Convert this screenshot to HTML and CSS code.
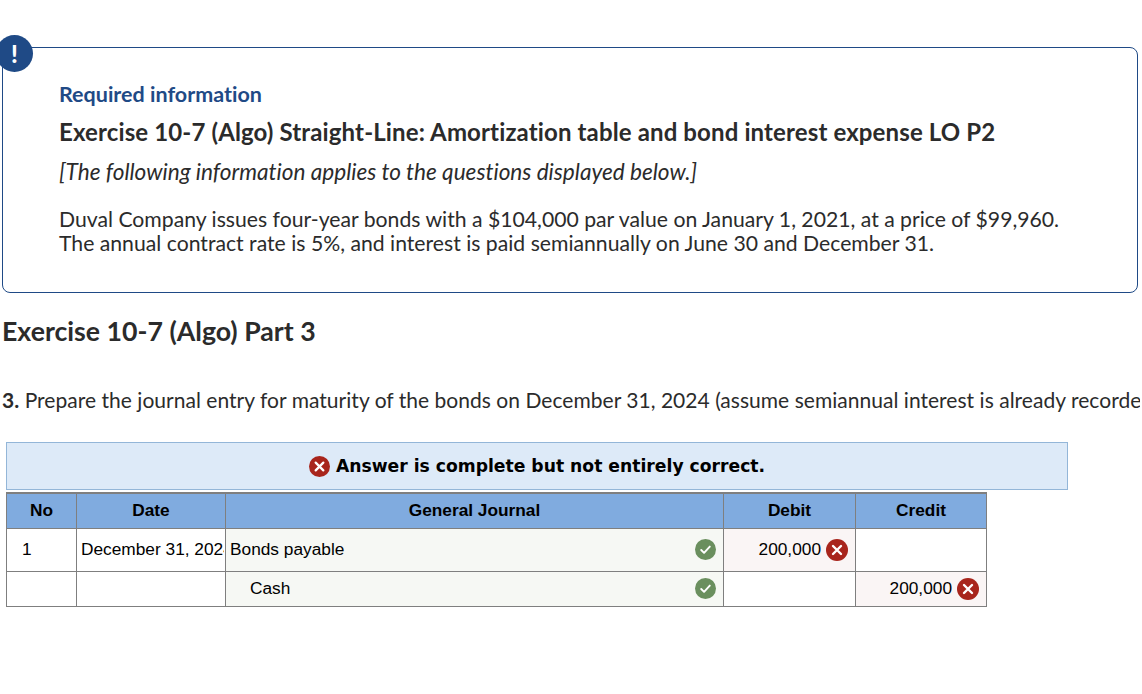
FILE: index.html
```html
<!DOCTYPE html>
<html lang="en">
  <head>
    <meta charset="UTF-8" />
    <title>Exercise 10-7 (Algo) Part 3</title>
    <link rel="stylesheet" href="styles.css">
  </head>
  <body>
    <div class="info-box">
      <div class="info-badge">!</div>
      <div class="info-label">Required information</div>
      <h1 class="info-title">Exercise 10-7 (Algo) Straight-Line: Amortization table and bond interest expense LO P2</h1>
      <p class="info-note">[The following information applies to the questions displayed below.]</p>
      <p class="info-text">Duval Company issues four-year bonds with a $104,000 par value on January 1, 2021, at a price of $99,960.<br>The annual contract rate is 5%, and interest is paid semiannually on June 30 and December 31.</p>
    </div>

    <h2 class="part-title">Exercise 10-7 (Algo) Part 3</h2>
    <p class="question"><b>3.</b> Prepare the journal entry for maturity of the bonds on December 31, 2024 (assume semiannual interest is already recorded).</p>

    <div class="answer-bar">
      <svg class="icon" viewBox="0 0 22 22"><circle cx="11" cy="11" r="11" fill="#a8251c"/><path d="M7 7l8 8M15 7l-8 8" stroke="#fff" stroke-width="2.4" stroke-linecap="round"/></svg>
      <span>Answer is complete but not entirely correct.</span>
    </div>

    <table class="journal">
      <thead>
        <tr>
          <th class="col-no">No</th>
          <th class="col-date">Date</th>
          <th class="col-desc">General Journal</th>
          <th class="col-debit">Debit</th>
          <th class="col-credit">Credit</th>
        </tr>
      </thead>
      <tbody>
        <tr class="row-first">
          <td class="no">1</td>
          <td class="date"><div class="clip">December 31, 2024</div></td>
          <td class="desc">
            <div class="cell-row">
              <span>Bonds payable</span>
              <svg class="icon" viewBox="0 0 22 22"><circle cx="11" cy="11" r="11" fill="#6a8f5e"/><path d="M6.5 11.5l3 3 6-6.5" fill="none" stroke="#fff" stroke-width="2" stroke-linecap="round" stroke-linejoin="round"/></svg>
            </div>
          </td>
          <td class="amt wrong">
            <div class="cell-amt">
              <span>200,000</span>
              <svg class="icon icon-x" viewBox="0 0 22 22"><circle cx="11" cy="11" r="11" fill="#a8251c"/><path d="M7 7l8 8M15 7l-8 8" stroke="#fff" stroke-width="2.4" stroke-linecap="round"/></svg>
            </div>
          </td>
          <td class="amt"></td>
        </tr>
        <tr class="row-second">
          <td class="no"></td>
          <td class="date"></td>
          <td class="desc">
            <div class="cell-row">
              <span class="indent">Cash</span>
              <svg class="icon" viewBox="0 0 22 22"><circle cx="11" cy="11" r="11" fill="#6a8f5e"/><path d="M6.5 11.5l3 3 6-6.5" fill="none" stroke="#fff" stroke-width="2" stroke-linecap="round" stroke-linejoin="round"/></svg>
            </div>
          </td>
          <td class="amt"></td>
          <td class="amt wrong">
            <div class="cell-amt">
              <span>200,000</span>
              <svg class="icon icon-x" viewBox="0 0 22 22"><circle cx="11" cy="11" r="11" fill="#a8251c"/><path d="M7 7l8 8M15 7l-8 8" stroke="#fff" stroke-width="2.4" stroke-linecap="round"/></svg>
            </div>
          </td>
        </tr>
      </tbody>
    </table>
  </body>
</html>
```

FILE: styles.css
```css
html, body {
  overflow: hidden;
}
body {
  margin: 0;
  padding: 47px 4px 0 2px;
  height: 694px;
  box-sizing: border-box;
  background: #fff;
  color: #2b2b2b;
  font-family: Lato, "Open Sans", sans-serif;
  font-variant-ligatures: none;
}
.info-box {
  position: relative;
  box-sizing: border-box;
  height: 246px;
  padding: 34px 40px 0 56px;
  border: 1px solid #1f4a86;
  border-radius: 8px;
}
.info-badge {
  position: absolute;
  left: -7px;
  top: -13px;
  width: 37px;
  height: 37px;
  border-radius: 50%;
  background: #1f4a86;
  color: #fff;
  font-size: 24px;
  font-weight: 900;
  line-height: 37px;
  text-align: center;
}
.info-label {
  color: #1f4a86;
  font-size: 21.5px;
  font-weight: 700;
  line-height: 24px;
}
.info-title {
  margin: 13px 0 0;
  font-size: 24px;
  font-weight: 700;
  letter-spacing: 0.13px;
  line-height: 26px;
  white-space: nowrap;
}
.info-note {
  margin: 14px 0 0;
  font-size: 22.6px;
  font-style: italic;
  line-height: 26px;
}
.info-text {
  margin: 22px 0 0;
  font-size: 21.2px;
  line-height: 24px;
  white-space: nowrap;
}
.part-title {
  margin: 23px 0 0;
  font-size: 26.7px;
  font-weight: 700;
  line-height: 30px;
}
.question {
  margin: 41px -2px 0 0;
  font-size: 21px;
  letter-spacing: 0.03px;
  line-height: 26px;
  white-space: nowrap;
  overflow: hidden;
}
.answer-bar {
  display: flex;
  align-items: center;
  justify-content: center;
  gap: 6px;
  box-sizing: border-box;
  width: 1062px;
  height: 48px;
  margin: 29px 0 0 4px;
  border: 1px solid #93b6d8;
  background: #ddeaf8;
  color: #000;
  font-family: "DejaVu Sans", sans-serif;
  font-size: 17.2px;
  font-weight: 700;
}
.icon {
  flex: none;
  width: 21px;
  height: 21px;
}
.icon-x {
  width: 22px;
  height: 22px;
}
.journal {
  width: 980px;
  margin: 2px 0 0 4px;
  border-collapse: collapse;
  table-layout: fixed;
  color: #000;
  font-family: "Liberation Sans", Arial, sans-serif;
  font-size: 17.3px;
}
.journal th,
.journal td {
  border: 1px solid #7f7f7f;
  padding: 0;
}
.journal th {
  height: 35px;
  background: #80abdf;
  font-weight: 700;
  box-sizing: border-box;
}
.journal thead tr {
  border-top: 2px solid #7f7f7f;
}
.col-no {
  width: 70px;
}
.col-date {
  width: 149px;
}
.col-desc {
  width: 498px;
}
.col-debit {
  width: 132px;
}
.col-credit {
  width: 131px;
}
.row-first td {
  height: 42px;
}
.row-second td {
  height: 34px;
}
.no {
  padding-left: 15px !important;
}
.date {
  padding-left: 4px !important;
}
.clip {
  width: 143px;
  overflow: hidden;
  white-space: nowrap;
}
.desc {
  background: #f6f8f4;
}
.cell-row {
  display: flex;
  align-items: center;
  justify-content: space-between;
  padding: 0 7px 0 4px;
}
.indent {
  padding-left: 20px;
}
.wrong {
  background: #faf5f5;
}
.cell-amt {
  display: flex;
  align-items: center;
  justify-content: flex-end;
  gap: 5px;
  padding-right: 7px;
}
```
